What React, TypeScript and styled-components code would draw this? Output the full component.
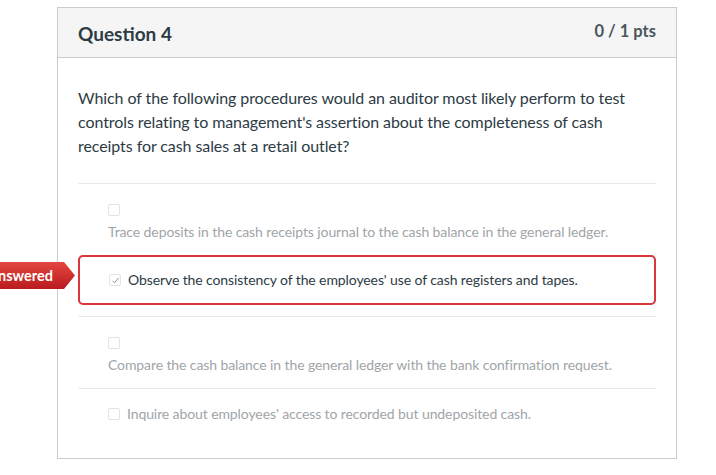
import React from "react";
import styled, { createGlobalStyle } from "styled-components";

const Global = createGlobalStyle`
  html, body { margin: 0; padding: 0; background: #ffffff; overflow: hidden; }
  body { font-family: Lato, "Open Sans", "Liberation Sans", sans-serif; color: #2d3b45; }
`;

const Page = styled.div`
  padding: 7px 0 0 57px;
  width: 620px;
`;

const Card = styled.section`
  border: 1px solid #c7cdd1;
  background: #fff;
`;

const Header = styled.header`
  height: 49px;
  background: #f5f5f5;
  border-bottom: 1px solid #c7cdd1;
  display: flex;
  justify-content: space-between;
  align-items: flex-start;
  padding: 0 20px;
`;

const Title = styled.h2`
  margin: 14px 0 0;
  font-size: 19px;
  font-weight: 700;
  line-height: 24px;
  color: #2d3b45;
`;

const Points = styled.div`
  margin-top: 11px;
  font-size: 16.5px;
  font-weight: 700;
  line-height: 24px;
  color: #4a555c;
`;

const Body = styled.div`
  padding: 28px 20px 32px;
`;

const Prompt = styled.p`
  margin: 0 0 25px;
  font-size: 16px;
  line-height: 24px;
  letter-spacing: -0.08px;
  color: #2d3b45;
`;

const Answers = styled.div`
  border-top: 1px solid #e8eaec;
  display: flex;
  flex-direction: column;
`;

const Answer = styled.div<{ $inline?: boolean; $divider?: boolean }>`
  display: flex;
  flex-direction: ${(p) => (p.$inline ? "row" : "column")};
  align-items: ${(p) => (p.$inline ? "center" : "flex-start")};
  gap: ${(p) => (p.$inline ? "7px" : "4px")};
  padding: ${(p) => (p.$inline ? "13px 0 0 30px" : "20px 0 11px 30px")};
  border-top: ${(p) => (p.$divider ? "1px solid #e8eaec" : "none")};
`;

const Selected = styled.div`
  position: relative;
  height: 46px;
  border: 2px solid #d9363e;
  border-radius: 5px;
  display: flex;
  align-items: center;
  gap: 7px;
  padding-left: 29px;
  margin-bottom: 11px;
`;

const Badge = styled.div`
  position: absolute;
  right: calc(100% + 5px);
  top: 5px;
  height: 27px;
  padding: 0 22px 0 12px;
  display: flex;
  align-items: center;
  white-space: nowrap;
  color: #fff;
  font-size: 14.5px;
  font-weight: 700;
  background: linear-gradient(#e4473f, #b91b1f);
  clip-path: polygon(0 0, calc(100% - 11px) 0, 100% 50%, calc(100% - 11px) 100%, 0 100%);
`;

const Box = styled.span`
  width: 10px;
  height: 10px;
  border: 1px solid #e1e4e6;
  border-radius: 2px;
  flex: none;
  display: flex;
  align-items: center;
  justify-content: center;
  background: #fff;
`;

const Text = styled.span<{ $muted?: boolean }>`
  font-size: 14px;
  line-height: 24px;
  letter-spacing: -0.1px;
  color: ${(p) => (p.$muted ? "#a0a5a9" : "#2d3b45")};
`;

const Check = () => (
  <svg width="9" height="9" viewBox="0 0 9 9">
    <path d="M1.5 4.8 L3.5 6.8 L7.6 1.8" fill="none" stroke="#8c9296" strokeWidth="1" />
  </svg>
);

export default function App() {
  return (
    <>
      <Global />
      <Page>
        <Card>
          <Header>
            <Title>Question 4</Title>
            <Points>0 / 1 pts</Points>
          </Header>
          <Body>
            <Prompt>
              Which of the following procedures would an auditor most likely perform to test
              controls relating to management's assertion about the completeness of cash
              receipts for cash sales at a retail outlet?
            </Prompt>
            <Answers>
              <Answer>
                <Box />
                <Text $muted>
                  Trace deposits in the cash receipts journal to the cash balance in the general ledger.
                </Text>
              </Answer>
              <Selected>
                <Badge>You Answered</Badge>
                <Box>
                  <Check />
                </Box>
                <Text>Observe the consistency of the employees' use of cash registers and tapes.</Text>
              </Selected>
              <Answer $divider>
                <Box />
                <Text $muted>
                  Compare the cash balance in the general ledger with the bank confirmation request.
                </Text>
              </Answer>
              <Answer $divider $inline>
                <Box />
                <Text $muted>Inquire about employees' access to recorded but undeposited cash.</Text>
              </Answer>
            </Answers>
          </Body>
        </Card>
      </Page>
    </>
  );
}
